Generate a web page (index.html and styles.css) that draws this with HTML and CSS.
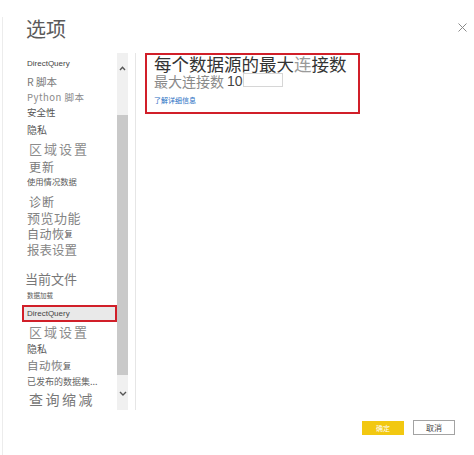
FILE: index.html
```html
<!DOCTYPE html>
<html lang="zh-CN">
<head>
<meta charset="utf-8">
<title>选项</title>
<link rel="stylesheet" href="styles.css">
</head>
<body>
<div class="dialog">
  <button class="close" aria-label="关闭">
    <svg width="9" height="9" viewBox="0 0 9 9"><path d="M0.5 0.5 L8.5 8.5 M8.5 0.5 L0.5 8.5" stroke="#8a8a8a" stroke-width="1" fill="none"/></svg>
  </button>
  <h1 class="title">选项</h1>
  <div class="main">
    <ul class="nav">
      <li class="item latin h20">DirectQuery</li>
      <li class="item f-r h16">R 脚本</li>
      <li class="item f-py h16">Python 脚本</li>
      <li class="item f-sec h14">安全性</li>
      <li class="item f-priv h20">隐私</li>
      <li class="item f-wide h18">区域设置</li>
      <li class="item f-upd h18">更新</li>
      <li class="item f-tiny h12">使用情况数据</li>
      <li class="item f-upd h16 gap6">诊断</li>
      <li class="item f-prev h16">预览功能</li>
      <li class="item f-auto h16">自动恢<span class="small">复</span></li>
      <li class="item f-rep h16">报表设置</li>
      <li class="item f-head h22 gap10">当前文件</li>
      <li class="item f-mini h12">数据加载</li>
      <li class="item latin selected h17 gap4">DirectQuery</li>
      <li class="item f-wide h18">区域设置</li>
      <li class="item f-priv h16">隐私</li>
      <li class="item f-auto2 h18">自动恢<span class="small">复</span></li>
      <li class="item f-pub h14">已发布的数据集...</li>
      <li class="item f-query h22">查询缩减</li>
    </ul>
    <div class="scrollbar">
      <div class="arrow">
        <svg width="7" height="5" viewBox="0 0 7 5"><path d="M1 4 L3.5 1.3 L6 4" stroke="#555" stroke-width="1.4" fill="none"/></svg>
      </div>
      <div class="track-top"></div>
      <div class="thumb"></div>
      <div class="arrow arrow-down">
        <svg width="8" height="5" viewBox="0 0 8 5"><path d="M1 1 L4 4 L7 1" stroke="#555" stroke-width="1.4" fill="none"/></svg>
      </div>
    </div>
    <div class="divider"></div>
    <section class="content">
      <div class="box">
        <h2 class="heading">每个数据源的最大<span class="faint">连</span>接数</h2>
        <div class="field">
          <span class="label">最大连接数</span> <span class="value">10</span><span class="input"></span>
        </div>
        <a class="link" href="#">了解详细信息</a>
      </div>
    </section>
  </div>
  <div class="footer">
    <button class="btn btn-primary">确定</button>
    <button class="btn btn-secondary">取消</button>
  </div>
</div>
</body>
</html>
```

FILE: styles.css
```css
* { box-sizing: border-box; }

html, body {
  margin: 0;
  padding: 0;
  background: #ffffff;
}

body {
  font-family: "Liberation Sans", "Noto Sans CJK SC", sans-serif;
  width: 474px;
  height: 455px;
  overflow: hidden;
}

.dialog {
  position: relative;
  width: 472px;
  height: 455px;
  margin-left: 2px;
  border-left: 1px solid #ececec;
  background: #ffffff;
}

.close {
  position: absolute;
  top: 6px;
  right: 7px;
  width: 9px;
  height: 9px;
  padding: 0;
  border: 0;
  background: transparent;
  line-height: 0;
}

.title {
  margin: 17px 0 0 23px;
  height: 24px;
  font-family: "Noto Sans CJK SC", sans-serif;
  font-size: 20px;
  line-height: 24px;
  font-weight: 400;
  color: #5a5a5a;
}

.main {
  display: flex;
  height: 357px;
  margin-top: 12px;
  padding-left: 19px;
}

/* nav */
.nav {
  list-style: none;
  margin: 0;
  padding: 0;
  width: 95px;
  flex: none;
}

.item {
  display: flex;
  align-items: center;
  padding-left: 5px;
  white-space: nowrap;
  font-family: "Noto Sans CJK SC", sans-serif;
}

.h12 { height: 12px; }
.h14 { height: 14px; }
.h16 { height: 16px; }
.h17 { height: 17px; }
.h18 { height: 18px; }
.h20 { height: 20px; }
.h22 { height: 22px; }
.gap4 { margin-top: 4px; }
.gap6 { margin-top: 6px; }
.gap10 { margin-top: 10px; }

.latin {
  font-family: "Liberation Sans", "Noto Sans CJK SC", sans-serif;
  font-size: 8px;
  color: #444;
}

.f-r { font-size: 10.5px; color: #7a7a7a; }
.f-py { font-size: 9.5px; letter-spacing: 0.5px; color: #8a8a8a; }
.f-sec { font-size: 9.5px; color: #555; }
.f-priv { font-size: 10px; color: #555; }
.f-wide { font-size: 13px; letter-spacing: 2px; color: #8c8c8c; padding-left: 7px; }
.f-upd { font-size: 12px; letter-spacing: 1px; color: #7a7a7a; padding-left: 7px; }
.f-tiny { font-size: 8.3px; color: #5a5a5a; }
.f-prev { font-size: 13px; letter-spacing: 0.5px; color: #858585; }
.f-auto { font-size: 12px; letter-spacing: 0.5px; color: #7a7a7a; }
.f-auto2 { font-size: 11.5px; letter-spacing: 0.5px; color: #7a7a7a; }
.f-rep { font-size: 12.5px; color: #858585; }
.f-head { font-size: 13px; color: #777; padding-left: 3px; }
.f-mini { font-size: 6.5px; color: #5a5a5a; }
.f-pub { font-size: 9px; color: #666; }
.f-query { font-size: 14px; letter-spacing: 2.5px; color: #777; padding-left: 7px; }

.small { font-size: 8px; color: #555; }

.selected {
  border: 2px solid #d11f29;
  background: #e9e9e9;
  padding-left: 3px;
}

/* scrollbar */
.scrollbar {
  width: 11px;
  flex: none;
  display: flex;
  flex-direction: column;
  background: #f0f0f0;
}

.arrow {
  height: 22px;
  display: flex;
  align-items: flex-end;
  justify-content: center;
  padding-bottom: 4px;
}

.track-top { height: 40px; }

.thumb {
  height: 260px;
  background: #c9c9c9;
}

.arrow-down {
  height: 35px;
  align-items: center;
  padding-bottom: 0;
  padding-top: 2px;
}

.divider {
  width: 1px;
  flex: none;
  margin-left: 7px;
  background: #e6e6e6;
}

/* content */
.content {
  padding-left: 9px;
  flex: 1;
}

.box {
  width: 215px;
  height: 61px;
  border: 2px solid #d11f29;
  padding-left: 7px;
}

.heading {
  margin: 0;
  height: 18px;
  font-family: "Noto Sans CJK SC", sans-serif;
  font-size: 17.5px;
  line-height: 18px;
  font-weight: 400;
  color: #333;
  white-space: nowrap;
}

.faint { color: #9a9a9a; }

.field {
  display: flex;
  align-items: center;
  height: 15px;
  white-space: nowrap;
}

.label {
  font-family: "Noto Sans CJK SC", sans-serif;
  font-size: 14px;
  color: #8a8a8a;
  margin-right: 3px;
}

.value {
  font-family: "Liberation Sans", sans-serif;
  font-size: 14px;
  color: #444;
}

.input {
  display: inline-block;
  width: 40px;
  height: 14px;
  border: 1px solid #d6d6d6;
  margin-top: -1px;
}

.link {
  display: block;
  margin-top: 6px;
  height: 12px;
  line-height: 12px;
  font-family: "Noto Sans CJK SC", sans-serif;
  font-size: 7px;
  color: #2a6fc4;
  text-decoration: none;
}

/* footer */
.footer {
  display: flex;
  justify-content: flex-end;
  align-items: flex-start;
  gap: 9px;
  margin-top: 10px;
  padding-right: 19px;
}

.btn {
  width: 42px;
  padding: 0;
  font-family: "Noto Sans CJK SC", sans-serif;
  cursor: pointer;
}

.btn-primary {
  height: 14px;
  margin-top: 1px;
  border: 0;
  background: #f2c811;
  color: #ffffff;
  font-size: 7px;
  line-height: 14px;
}

.btn-secondary {
  height: 15px;
  border: 1px solid #a3a3a3;
  background: #ffffff;
  color: #444;
  font-size: 8px;
  line-height: 13px;
}
```
